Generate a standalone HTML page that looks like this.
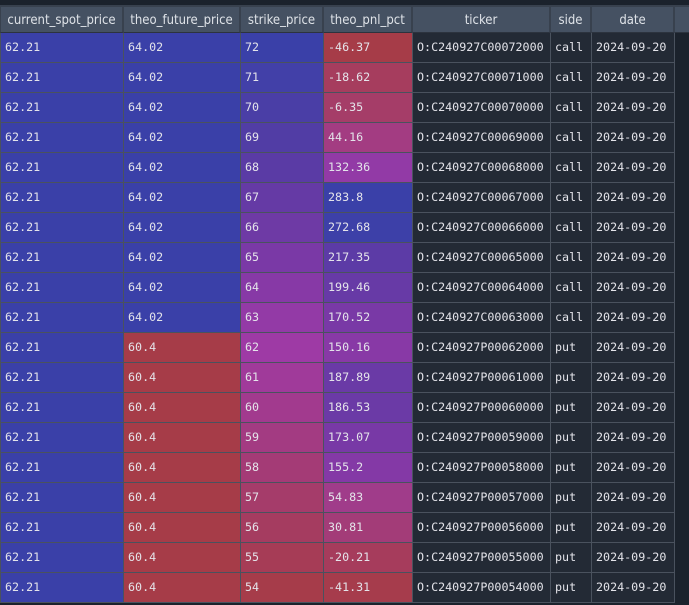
<!DOCTYPE html>
<html><head><meta charset="utf-8"><style>
*{margin:0;padding:0;box-sizing:border-box}
body{width:689px;height:605px;background:#1b222c;position:relative;overflow:hidden}
.top{position:absolute;left:0;top:5px;width:689px;height:2px;background:#38414e}
.hdr{position:absolute;top:7px;height:26px;background:#455162;border-right:2px solid #38414e;border-bottom:1px solid #2c333e;color:#dfe3e8;font:13px "DejaVu Sans Condensed","Liberation Sans Narrow","Liberation Sans",sans-serif;text-align:center;line-height:27px;white-space:nowrap;overflow:hidden}
.c{position:absolute;height:30px;border-right:1px solid #4a525e;border-bottom:1px solid #4a525e;color:#e4e4ea;font:11.7px "DejaVu Sans Mono","Liberation Mono",monospace;line-height:29px;padding-left:4px;white-space:nowrap;overflow:hidden}
.d{background:#232a35}
</style></head><body>
<div class="top"></div>
<div class="hdr" style="left:0;width:124px;border-left:1px solid #38414e">current_spot_price</div>
<div class="hdr" style="left:124px;width:117px">theo_future_price</div>
<div class="hdr" style="left:241px;width:83px">strike_price</div>
<div class="hdr" style="left:324px;width:89px">theo_pnl_pct</div>
<div class="hdr" style="left:413px;width:138px">ticker</div>
<div class="hdr" style="left:551px;width:41px">side</div>
<div class="hdr" style="left:592px;width:83px">date</div>
<div class="hdr" style="left:675px;width:14px;border-right:none"></div>
<div id="g"></div>
<script>
var strikes=[72,71,70,69,68,67,66,65,64,63,62,61,60,59,58,57,56,55,54];
var sc=["#3a40a8","#4240a8","#4a3ea6","#513da5","#5a3ba5","#653aa5","#6e3aa5","#7a39a6","#8739a6","#933aa6","#9e3aa5","#a03a9a","#a23a8e","#a33b82","#a43b76","#a53c6a","#a53c60","#a63c56","#a63c4a"];
var pn=["-46.37","-18.62","-6.35","44.16","132.36","283.8","272.68","217.35","199.46","170.52","150.16","187.89","186.53","173.07","155.2","54.83","30.81","-20.21","-41.31"];
var pc=["#a63c48","#a63d5e","#a53d68","#a33c82","#923aa6","#3a40a8","#3d40a8","#5c3ba6","#673aa6","#7939a6","#8839a6","#6a3aa6","#6b3aa6","#7839a6","#8439a6","#a03c8a","#a33c78","#a63c5c","#a63c4c"];
var h="";
for(var i=0;i<19;i++){
 var y=33+i*30,call=i<10;
 var t="O:C240927"+(call?"C":"P")+"000"+strikes[i]+"000";
 h+='<div class="c" style="left:0;top:'+y+'px;width:124px;background:#3a40a8;border-left:1px solid #4a525e">62.21</div>';
 h+='<div class="c" style="left:124px;top:'+y+'px;width:117px;background:'+(call?"#3a40a8":"#a63c48")+'">'+(call?"64.02":"60.4")+'</div>';
 h+='<div class="c" style="left:241px;top:'+y+'px;width:83px;background:'+sc[i]+'">'+strikes[i]+'</div>';
 h+='<div class="c" style="left:324px;top:'+y+'px;width:89px;background:'+pc[i]+'">'+pn[i]+'</div>';
 h+='<div class="c d" style="left:413px;top:'+y+'px;width:138px">'+t+'</div>';
 h+='<div class="c d" style="left:551px;top:'+y+'px;width:41px">'+(call?"call":"put")+'</div>';
 h+='<div class="c d" style="left:592px;top:'+y+'px;width:83px">2024-09-20</div>';
}
document.getElementById("g").innerHTML=h;
</script>
</body></html>
